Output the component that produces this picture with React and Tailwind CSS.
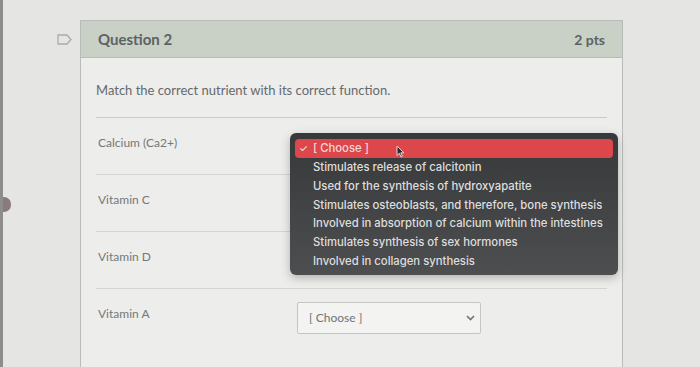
import React from "react";

const options = [
  "Stimulates release of calcitonin",
  "Used for the synthesis of hydroxyapatite",
  "Stimulates osteoblasts, and therefore, bone synthesis",
  "Involved in absorption of calcium within the intestines",
  "Stimulates synthesis of sex hormones",
  "Involved in collagen synthesis",
];

const rows = ["Calcium (Ca2+)", "Vitamin C", "Vitamin D", "Vitamin A"];

function Select({ hidden }) {
  return (
    <div
      className={`w-[184px] h-[32px] bg-[#f3f3f2] border border-[#c4c6c5] rounded-[2px] flex items-center justify-between pl-[11px] pr-[5px] ${hidden ? "invisible" : ""}`}
    >
      <span className="text-[12px] text-[#6f7375]">[ Choose ]</span>
      <svg width="9" height="6" viewBox="0 0 9 6">
        <path d="M1 1 L4.5 4.5 L8 1" fill="none" stroke="#6f7375" strokeWidth="1.6" />
      </svg>
    </div>
  );
}

export default function App() {
  return (
    <div
      className="w-[700px] h-[367px] bg-[#e5e5e3] border-l-[3px] border-[#8d8d8d] relative overflow-hidden"
      style={{ fontFamily: "Lato, 'Noto Sans', sans-serif" }}
    >
      <div className="absolute left-[-6px] top-[197px] w-[14px] h-[15px] rounded-full bg-[#8a7a7e]" />
      <div className="flex pt-[20px] pl-[54px]">
        <div className="w-[23px] pt-[14px]">
          <svg width="15" height="11" viewBox="0 0 15 11">
            <path d="M1 1 H10 L14 5.5 L10 10 H1 Z" fill="none" stroke="#a9abab" strokeWidth="1.3" />
          </svg>
        </div>
        <div className="w-[543px] h-[360px] bg-[#ededeb] border border-[#b9bcba]">
          <div className="h-[37px] bg-[#c9d0c5] border-b border-[#b7bdb4] flex items-center justify-between pl-[17px] pr-[17px]">
            <span className="text-[15px] font-bold text-[#5c6264]">Question 2</span>
            <span className="text-[14px] font-bold text-[#5c6264]">2 pts</span>
          </div>
          <div className="px-[15px]">
            <div className="pt-[23px] pb-[18px] border-b border-[#c9cbc9] text-[13px] leading-[18px] text-[#66696b]">
              Match the correct nutrient with its correct function.
            </div>
            {rows.map((r, i) => (
              <div
                key={r}
                className={`h-[57px] flex ${i < 3 ? "border-b border-[#d3d5d3]" : ""}`}
              >
                <div className="w-[201px] pl-[2px] pt-[16px] text-[12px] text-[#74787a]">{r}</div>
                <div className="pt-[13px]">
                  <Select hidden={i < 3} />
                </div>
              </div>
            ))}
          </div>
        </div>
      </div>

      <div
        className="absolute left-[287px] top-[133px] w-[328px] h-[142px] rounded-[6px] bg-gradient-to-b from-[#37383a] to-[#4d4e50] shadow-[0_3px_10px_rgba(0,0,0,0.25)] p-[5px]"
        style={{ fontFamily: "Inter, 'Liberation Sans', sans-serif" }}
      >
        <div className="h-[19px] mt-[1px] rounded-[4px] bg-[#dc474c] flex items-center pl-[4px] text-[11.3px] font-medium text-[#f3d6d6]">
          <span className="w-[14px] text-[10px]">✓</span>
          <span>[ Choose ]</span>
          <svg className="ml-[27px] mt-[6px]" width="9" height="13" viewBox="0 0 9 13">
            <path d="M1 1 L1 10.5 L3.3 8.3 L5 12 L6.4 11.3 L4.8 7.8 L8 7.8 Z" fill="#2a2a2a" stroke="#e8e8e8" strokeWidth="0.9" />
          </svg>
        </div>
        {options.map((o) => (
          <div key={o} className="h-[18.8px] flex items-center pl-[18px] text-[11.3px] font-medium text-[#dedede] whitespace-nowrap">
            {o}
          </div>
        ))}
      </div>
    </div>
  );
}
